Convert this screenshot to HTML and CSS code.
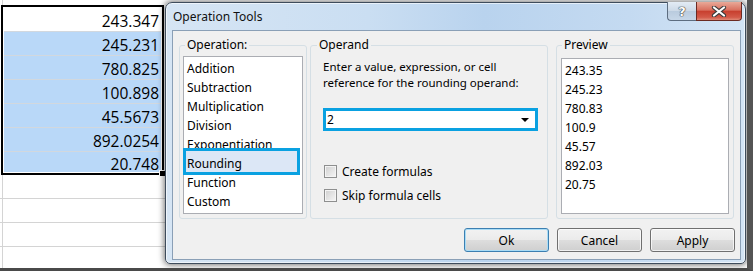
FILE: index.html
```html
<!DOCTYPE html>
<html lang="en">
<head>
    <meta charset="UTF-8">
    <title>Operation Tools</title>
    <link rel="stylesheet" href="styles.css">
</head>
<body>
    <div class="sheet">
        <div class="sheet-top"></div>
        <div class="selection">
            <div class="cell first">243.347</div>
            <div class="cell">245.231</div>
            <div class="cell">780.825</div>
            <div class="cell">100.898</div>
            <div class="cell">45.5673</div>
            <div class="cell">892.0254</div>
            <div class="cell last">20.748</div>
            <span class="fill-handle"></span>
        </div>
        <div class="row"></div>
        <div class="row"></div>
        <div class="row"></div>
        <div class="row"></div>
    </div>

    <div class="dialog">
        <div class="titlebar">
            <span class="title">Operation Tools</span>
            <div class="caption-buttons">
                <span class="cap-btn help">?</span>
                <span class="cap-btn close">
                    <svg width="16" height="11" viewBox="0 0 16 11">
                        <path d="M3 1.5 L13 9.5 M13 1.5 L3 9.5" stroke="#3b3b3b" stroke-width="4.2" stroke-linecap="round"/>
                        <path d="M3 1.5 L13 9.5 M13 1.5 L3 9.5" stroke="#fff" stroke-width="2.2" stroke-linecap="round"/>
                    </svg>
                </span>
            </div>
        </div>

        <div class="client">
            <div class="groups">
                <fieldset class="group op-group">
                    <legend>Operation:</legend>
                    <div class="group-body">
                        <ul class="listbox op-list">
                            <li>Addition</li>
                            <li>Subtraction</li>
                            <li>Multiplication</li>
                            <li>Division</li>
                            <li>Exponentiation</li>
                            <li class="selected">Rounding</li>
                            <li>Function</li>
                            <li>Custom</li>
                        </ul>
                    </div>
                </fieldset>

                <fieldset class="group operand-group">
                    <legend>Operand</legend>
                    <div class="group-body">
                        <p class="hint">Enter a value, expression, or cell<br>reference for the rounding operand:</p>
                        <div class="combo">
                            <span class="combo-value">2</span>
                            <span class="combo-arrow"></span>
                        </div>
                        <label class="check first-check"><span class="box"></span>Create formulas</label>
                        <label class="check"><span class="box"></span>Skip formula cells</label>
                    </div>
                </fieldset>

                <fieldset class="group preview-group">
                    <legend>Preview</legend>
                    <div class="group-body">
                        <ul class="listbox preview-list">
                            <li>243.35</li>
                            <li>245.23</li>
                            <li>780.83</li>
                            <li>100.9</li>
                            <li>45.57</li>
                            <li>892.03</li>
                            <li>20.75</li>
                        </ul>
                    </div>
                </fieldset>
            </div>

            <div class="buttons">
                <button class="btn default">Ok</button>
                <button class="btn">Cancel</button>
                <button class="btn">Apply</button>
            </div>
        </div>
    </div>
</body>
</html>
```

FILE: styles.css
```css
body {
    margin: 0;
    width: 747px;
    height: 268px;
    position: relative;
    overflow: hidden;
    background-color: #fff;
    border-right: 6px solid #545454;
    border-bottom: 3px solid #4a4a4a;
    font-family: "Noto Sans", sans-serif;
    font-size: 12px;
    color: #000;
}

/* spreadsheet behind the dialog */

.sheet {
    width: 170px;
    background-image: linear-gradient(to right, transparent 2px, #d4d4d4 2px, #d4d4d4 3px, transparent 3px);
}

.sheet-top {
    height: 5px;
}

.selection {
    position: relative;
    width: 163px;
    margin-left: 1px;
    box-sizing: border-box;
    border: 2px solid #000;
    padding: 1px;
    background-color: #fff;
}

.cell {
    height: 23px;
    border-bottom: 1px solid #d2d8de;
    padding-right: 2px;
    text-align: right;
    font-family: "Open Sans", sans-serif;
    font-size: 15.5px;
    line-height: 26px;
    background-color: #b9d8f8;
}

.cell.first {
    background-color: #fff;
}

.cell.last {
    height: 20px;
    border-bottom: none;
    line-height: 24px;
}

.fill-handle {
    position: absolute;
    right: -4px;
    bottom: -4px;
    width: 5px;
    height: 5px;
    background-color: #000;
    border: 1px solid #fff;
}

.row {
    height: 23px;
    border-bottom: 1px solid #d4d4d4;
}

/* dialog window */

.dialog {
    position: absolute;
    left: 165px;
    top: 2px;
    width: 581px;
    height: 262px;
    box-sizing: border-box;
    padding: 0 4px 3px 6px;
    border: 1px solid #3e4c5c;
    border-radius: 7px 7px 5px 5px;
    background: linear-gradient(to right, #d6e5f4 0%, #cadef2 35%, #b9d3ee 55%, #c4daf1 80%, #d3e4f5 100%);
    box-shadow: 0 0 6px 1px rgba(0, 0, 0, 0.55), inset 0 0 0 1px rgba(255, 255, 255, 0.6);
}

.titlebar {
    height: 27px;
    display: flex;
    justify-content: space-between;
    align-items: flex-start;
}

.title {
    padding-left: 1px;
    line-height: 27px;
    color: #111;
}

.caption-buttons {
    display: flex;
    margin-top: -1px;
    margin-right: -1px;
}

.cap-btn {
    height: 19px;
    box-sizing: border-box;
    border: 1px solid #5d6d80;
    border-top: none;
    display: flex;
    align-items: center;
    justify-content: center;
}

.help {
    width: 29px;
    border-right: none;
    border-radius: 0 0 0 4px;
    background: linear-gradient(#e3ebf4, #ccd9e7 50%, #b9cbde 51%, #c7d7e8);
    color: #fff;
    font-family: "DejaVu Sans", sans-serif;
    font-weight: bold;
    font-size: 13px;
    text-shadow: 0 0 1px #333, 0 0 1px #333, 0 0 1px #333;
}

.close {
    width: 46px;
    border-radius: 0 0 4px 0;
    border-color: #6b2a22;
    background: linear-gradient(#e9a998, #d9705f 45%, #c8402f 52%, #d35a49 85%, #e08a77);
}

.client {
    height: 230px;
    box-sizing: border-box;
    border: 1px solid #8a9fb6;
    background-color: #f0f0f0;
    padding: 6px 5px 0 6px;
}

.groups {
    display: flex;
}

.group {
    margin: 0;
    padding: 0;
    min-width: 0;
    border: 1px solid #d5dfe5;
    border-radius: 3px;
    box-sizing: border-box;
}

.group legend {
    padding: 0 2px;
    line-height: 16px;
}

.op-group {
    width: 128px;
}

.op-group legend {
    margin-left: 5px;
}

.operand-group {
    width: 238px;
    margin-left: 3px;
}

.operand-group legend {
    margin-left: 6px;
}

.preview-group {
    width: 178px;
    margin-left: 8px;
}

.preview-group legend {
    margin-left: 5px;
}

.listbox {
    list-style: none;
    margin: 0;
    padding: 2px 0 0 3px;
    box-sizing: border-box;
    border: 1px solid #abadb3;
    background-color: #fff;
}

.listbox li {
    line-height: 19px;
    height: 19px;
    white-space: nowrap;
}

.op-group .group-body {
    padding: 3px 3px 4px 3px;
}

.op-list {
    height: 158px;
}

.op-list li.selected {
    position: relative;
    z-index: 0;
}

.op-list li.selected::before {
    content: "";
    position: absolute;
    z-index: -1;
    top: -6px;
    bottom: -2px;
    left: -4px;
    right: 2px;
    border: 3px solid #0aa1e1;
    background-color: #dce7f6;
}

.operand-group .group-body {
    padding: 6px 0 0 12px;
}

.hint {
    margin: 0;
    font-size: 11.5px;
    line-height: 16px;
}

.combo {
    margin-top: 17px;
    width: 215px;
    height: 23px;
    box-sizing: border-box;
    border: 3px solid #0aa1e1;
    background-color: #fff;
    display: flex;
    align-items: center;
    justify-content: space-between;
    padding: 0 6px 0 1px;
}

.combo-arrow {
    width: 0;
    height: 0;
    border-left: 4px solid transparent;
    border-right: 4px solid transparent;
    border-top: 4px solid #000;
}

.check {
    display: flex;
    align-items: center;
    height: 24px;
}

.first-check {
    margin-top: 28px;
}

.box {
    width: 13px;
    height: 13px;
    box-sizing: border-box;
    margin-left: 1px;
    margin-right: 5px;
    border: 1px solid #8e8f8f;
    background: linear-gradient(135deg, #cfcfcf, #f6f6f6);
    box-shadow: inset 0 0 0 1px #f4f4f4;
}

.preview-group .group-body {
    padding: 5px 4px 4px 4px;
}

.preview-list {
    height: 156px;
}

.buttons {
    display: flex;
    justify-content: flex-end;
    gap: 8px;
    margin-top: 9px;
}

.btn {
    width: 85px;
    height: 24px;
    padding: 0;
    border: 1px solid #707070;
    border-radius: 3px;
    background: linear-gradient(#f2f2f2, #ebebeb 48%, #dddddd 52%, #cfcfcf);
    box-shadow: inset 0 0 0 1px rgba(255, 255, 255, 0.7);
    font-family: "Noto Sans", sans-serif;
    font-size: 12px;
    color: #000;
}

.btn.default {
    border-color: #3c7fb1;
    box-shadow: inset 0 0 0 1px #a9dcf6;
}
```
